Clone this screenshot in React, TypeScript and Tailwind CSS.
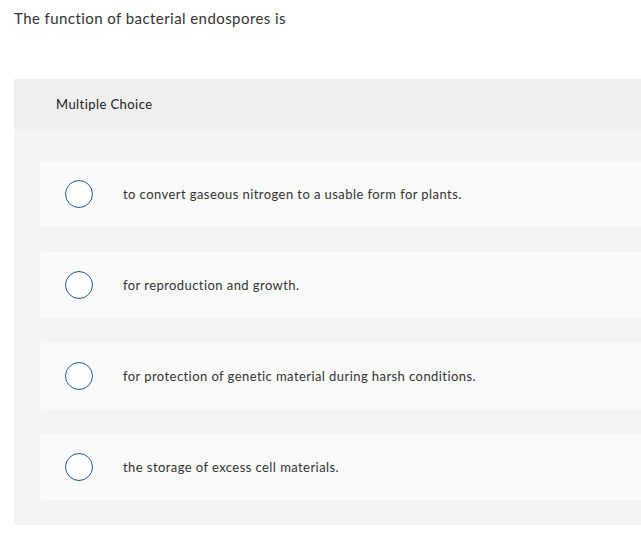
const options = [
  'to convert gaseous nitrogen to a usable form for plants.',
  'for reproduction and growth.',
  'for protection of genetic material during harsh conditions.',
  'the storage of excess cell materials.',
];

export default function App() {
  return (
    <div className="min-h-[545px] w-[641px] overflow-hidden bg-white font-['Lato',sans-serif] tracking-[0.027em] text-[#333]">
      <p className="pl-[14px] pt-[8px] text-[15px] leading-[20px]">
        The function of bacterial endospores is
      </p>

      <div className="ml-[14px] mt-[51px] w-[700px]">
        <div className="flex h-[50px] items-center bg-[#efefef] pl-[42px] pt-[2px] text-[13px] text-[#222]">
          Multiple Choice
        </div>
        <div className="flex flex-col gap-[25px] bg-[#f4f4f4] pb-[25px] pl-[26px] pt-[32px]">
          {options.map((opt) => (
            <div
              key={opt}
              className="flex h-[66px] items-center rounded-[3px] bg-[#fafafa] pl-[25px]"
            >
              <span className="h-[28px] w-[28px] shrink-0 rounded-full border-[1.5px] border-[#1f5a96] bg-white" />
              <span className="ml-[30px] pt-[2px] text-[13px] text-[#333]">{opt}</span>
            </div>
          ))}
        </div>
      </div>
    </div>
  );
}
